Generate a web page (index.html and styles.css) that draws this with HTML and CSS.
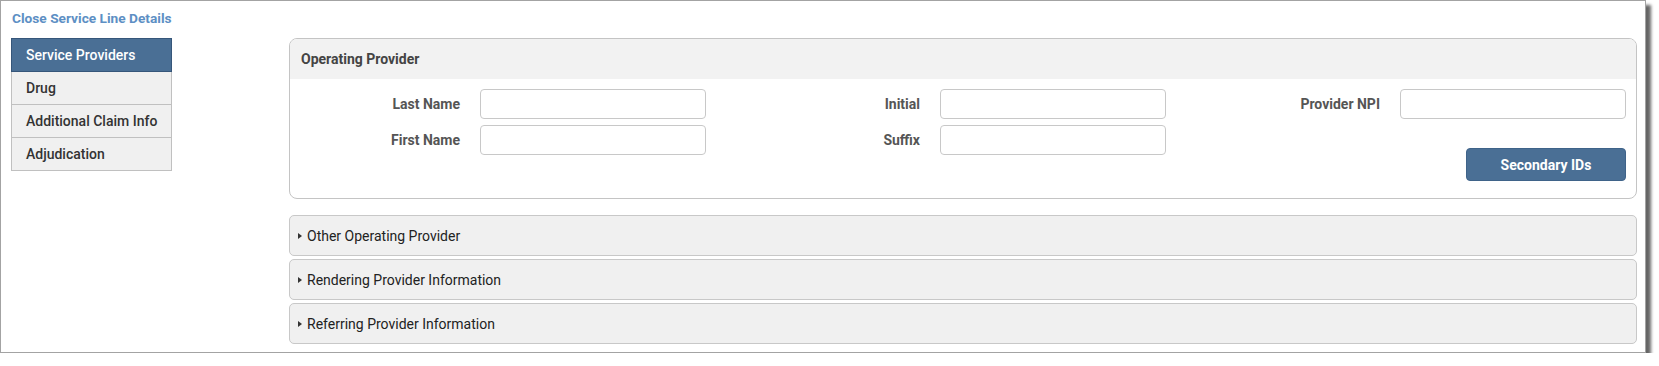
FILE: index.html
```html
<!DOCTYPE html>
<html>
<head>
<meta charset="utf-8">
<link rel="stylesheet" href="styles.css">
</head>
<body>
<div class="frame">
  <div class="close-link">Close Service Line Details</div>
  <div class="layout">
    <nav class="tabs">
      <div class="tab active">Service Providers</div>
      <div class="tab">Drug</div>
      <div class="tab">Additional Claim Info</div>
      <div class="tab">Adjudication</div>
    </nav>
    <main class="main">
      <section class="panel">
        <div class="panel-head">Operating Provider</div>
        <div class="panel-body">
          <div class="group group-first">
            <label class="lbl">Last Name</label><input class="inp" type="text">
            <label class="lbl">First Name</label><input class="inp" type="text">
          </div>
          <div class="group">
            <label class="lbl">Initial</label><input class="inp" type="text">
            <label class="lbl">Suffix</label><input class="inp" type="text">
          </div>
          <div class="group">
            <label class="lbl">Provider NPI</label><input class="inp" type="text">
            <button class="btn">Secondary IDs</button>
          </div>
        </div>
      </section>
      <div class="collapsed first"><span class="caret"></span>Other Operating Provider</div>
      <div class="collapsed"><span class="caret"></span>Rendering Provider Information</div>
      <div class="collapsed"><span class="caret"></span>Referring Provider Information</div>
    </main>
  </div>
</div>
</body>
</html>
```
FILE: styles.css
```css
* { box-sizing: border-box; }
html, body { margin: 0; padding: 0; background: #fff; }
body { font-family: Roboto, "Liberation Sans", Arial, sans-serif; color: #333; }

.frame {
  width: 1646px;
  height: 353px;
  border: 1px solid #a3a3a3;
  background: #fff;
  box-shadow: 5px 5px 3px rgba(0, 0, 0, 0.6);
  padding: 7px 8px 0 10px;
}

.close-link {
  font-size: 13.7px;
  font-weight: 700;
  line-height: 20px;
  color: #5d8fc4;
  padding-left: 1px;
  margin-bottom: 10px;
}

.layout { display: flex; gap: 117px; }

.tabs { width: 161px; flex: none; }
.tab {
  height: 33px;
  line-height: 32px;
  padding-left: 14px;
  font-size: 14px;
  font-weight: 500;
  color: #333;
  background: #f0f0f0;
  border: 1px solid #c0c0c0;
  border-top: none;
}
.tab.active {
  height: 34px;
  background: #4a6f95;
  color: #fff;
  border: 1px solid #36567a;
}

.main { width: 1348px; flex: none; }

.panel {
  border: 1px solid #c4c4c4;
  border-radius: 8px;
  overflow: hidden;
}
.panel-head {
  height: 40px;
  line-height: 41px;
  background: #f2f2f2;
  padding-left: 11px;
  font-size: 14px;
  font-weight: 700;
  color: #444;
}
.panel-body {
  display: flex;
  padding: 10px 10px 17px 0;
}
.group {
  display: grid;
  grid-template-columns: 234px 226px;
  row-gap: 6px;
  align-content: start;
}
.group-first { grid-template-columns: 190px 226px; }

.lbl {
  text-align: right;
  padding-right: 20px;
  line-height: 30px;
  font-size: 14px;
  font-weight: 700;
  color: #555;
}
.inp {
  height: 30px;
  width: 226px;
  border: 1px solid #c8c8c8;
  border-radius: 4px;
  background: #fff;
  margin: 0;
}

.btn {
  grid-column: 2;
  justify-self: end;
  width: 160px;
  height: 33px;
  margin-top: 23px;
  background: #4a6f95;
  border: 1px solid #3f6389;
  border-radius: 4px;
  color: #fff;
  font-family: Roboto, "Liberation Sans", Arial, sans-serif;
  font-size: 14px;
  font-weight: 700;
}

.collapsed {
  height: 41px;
  margin-top: 3px;
  background: #f0f0f0;
  border: 1px solid #c8c8c8;
  border-radius: 5px;
  display: flex;
  align-items: center;
  padding-left: 8px;
  font-size: 14px;
  font-weight: 400;
  color: #222;
}
.collapsed.first { margin-top: 16px; }
.caret {
  width: 0;
  height: 0;
  border-top: 3.5px solid transparent;
  border-bottom: 3.5px solid transparent;
  border-left: 4px solid #333;
  margin-right: 5px;
}
```
